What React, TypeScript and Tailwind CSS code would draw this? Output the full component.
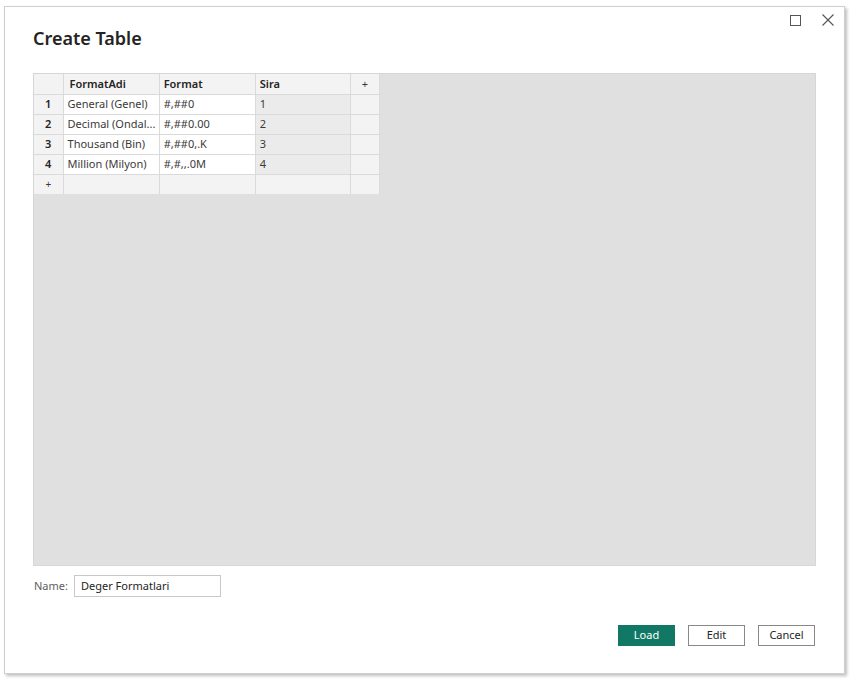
import React from "react";

type Row = { id: number; name: string; format: string; sira: string };

const ROWS: Row[] = [
  { id: 1, name: "General (Genel)", format: "#,##0", sira: "1" },
  { id: 2, name: "Decimal (Ondal...", format: "#,##0.00", sira: "2" },
  { id: 3, name: "Thousand (Bin)", format: "#,##0,.K", sira: "3" },
  { id: 4, name: "Million (Milyon)", format: "#,#,,.0M", sira: "4" },
];

const font = { fontFamily: '"Segoe UI", "Noto Sans", "Open Sans", sans-serif' };

const cell = "h-[20px] border border-[#dadada] px-[4px] align-middle whitespace-nowrap overflow-hidden";

const App = () => {
  return (
    <div className="w-[850px] h-[679px] bg-white pt-[6px] pl-[4px]" style={font}>
      <div className="flex flex-col w-[841px] h-[668px] border border-[#cfcfcf] bg-white shadow-[2px_2px_3px_rgba(0,0,0,0.25)]">
        {/* title bar */}
        <div className="flex items-start justify-between h-[66px] pl-[28px] pr-[10px]">
          <h1 className="mt-[18px] text-[18px] leading-[26px] font-semibold text-[#252423]">
            Create Table
          </h1>
          <div className="flex items-center gap-[21px] mt-[7px] text-[#555]">
            <svg width="11" height="11" viewBox="0 0 11 11" fill="none" stroke="currentColor">
              <rect x="0.5" y="0.5" width="10" height="10" />
            </svg>
            <svg width="12" height="12" viewBox="0 0 12 12" fill="none" stroke="currentColor" strokeWidth="1.1">
              <path d="M0.5 0.5l11 11M11.5 0.5l-11 11" />
            </svg>
          </div>
        </div>

        {/* grid area */}
        <div className="ml-[28px] w-[783px] h-[493px] border border-[#d6d6d6] bg-[#e0e0e0]">
          <table className="table-fixed w-[346px] border-collapse text-[11px] text-[#3b3a39]">
            <colgroup>
              <col className="w-[29px]" />
              <col className="w-[96px]" />
              <col className="w-[96px]" />
              <col className="w-[95px]" />
              <col className="w-[29px]" />
            </colgroup>
            <thead>
              <tr className="bg-[#f3f3f3]">
                <th className={`${cell} border-t-0 border-l-0`} />
                <th className={`${cell} border-t-0 text-left font-semibold text-[#252423] pl-[6px]`}>FormatAdi</th>
                <th className={`${cell} border-t-0 text-left font-semibold text-[#252423]`}>Format</th>
                <th className={`${cell} border-t-0 text-left font-semibold text-[#252423]`}>Sira</th>
                <th className={`${cell} border-t-0 text-center font-normal`}>+</th>
              </tr>
            </thead>
            <tbody>
              {ROWS.map((r) => (
                <tr key={r.id}>
                  <td className={`${cell} border-l-0 bg-[#f3f3f3] text-center font-semibold text-[#252423]`}>{r.id}</td>
                  <td className={`${cell} bg-white`}>{r.name}</td>
                  <td className={`${cell} bg-white`}>{r.format}</td>
                  <td className={`${cell} bg-[#ebebeb]`}>{r.sira}</td>
                  <td className={`${cell} bg-[#f3f3f3]`} />
                </tr>
              ))}
              <tr className="bg-[#f3f3f3]">
                <td className={`${cell} border-l-0 border-b-0 text-center text-[10px]`}>+</td>
                <td className={`${cell} border-b-0`} />
                <td className={`${cell} border-b-0`} />
                <td className={`${cell} border-b-0`} />
                <td className={`${cell} border-b-0`} />
              </tr>
            </tbody>
          </table>
        </div>

        {/* name */}
        <div className="flex items-center mt-[9px] ml-[29px] gap-[6px]">
          <span className="text-[11px] text-[#605e5c]">Name:</span>
          <div className="w-[147px] h-[22px] border border-[#c8c8c8] px-[6px] flex items-center text-[11px] text-[#252423]">
            Deger Formatlari
          </div>
        </div>

        {/* buttons */}
        <div className="flex justify-end gap-[13px] mt-[28px] mr-[29px]">
          <button className="w-[57px] h-[21px] bg-[#117865] text-white text-[11px]">Load</button>
          <button className="w-[57px] h-[21px] border border-[#8a8886] bg-white text-[#252423] text-[11px]">Edit</button>
          <button className="w-[57px] h-[21px] border border-[#8a8886] bg-white text-[#252423] text-[11px]">Cancel</button>
        </div>
      </div>
    </div>
  );
};

export default App;
